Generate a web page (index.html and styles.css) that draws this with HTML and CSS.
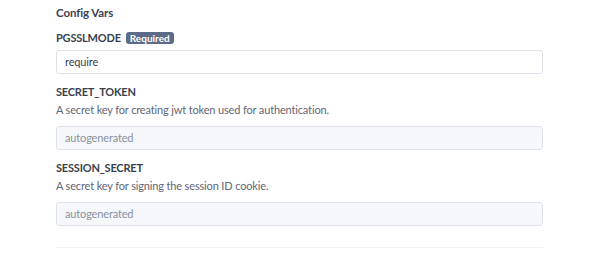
FILE: index.html
```html
<!DOCTYPE html>
<html>
<head>
<meta charset="utf-8">
<link rel="stylesheet" href="styles.css">
</head>
<body>
<div class="panel">
  <h3 class="title">Config Vars</h3>
  <div class="field">
    <div class="label">PGSSLMODE <span class="badge">Required</span></div>
    <div class="input">require</div>
  </div>
  <div class="field">
    <div class="label">SECRET_TOKEN</div>
    <div class="desc">A secret key for creating jwt token used for authentication.</div>
    <div class="input input-muted">autogenerated</div>
  </div>
  <div class="field">
    <div class="label">SESSION_SECRET</div>
    <div class="desc">A secret key for signing the session ID cookie.</div>
    <div class="input input-muted">autogenerated</div>
  </div>
  <div class="divider"></div>
</div>
</body>
</html>
```
FILE: styles.css
```css
html, body {
  margin: 0;
  padding: 0;
  background: #ffffff;
}
body {
  font-family: "Lato", "Open Sans", sans-serif;
  color: #3f4451;
}
.panel {
  width: 487px;
  margin-left: 56px;
  padding-top: 5px;
  display: flex;
  flex-direction: column;
  gap: 11px;
}
.title {
  margin: 0;
  font-size: 11.5px;
  font-weight: 700;
  line-height: 15px;
  letter-spacing: -0.1px;
  color: #3c4150;
}
.field {
  display: flex;
  flex-direction: column;
}
.label {
  display: flex;
  align-items: center;
  gap: 5px;
  font-size: 11px;
  font-weight: 700;
  line-height: 14px;
  height: 14px;
  letter-spacing: -0.2px;
  color: #3a3f4d;
}
.badge {
  display: inline-block;
  background: #5c6c88;
  color: #ffffff;
  font-size: 10px;
  font-weight: 700;
  line-height: 12px;
  height: 12px;
  padding: 0 4px;
  letter-spacing: 0;
  border-radius: 3px;
}
.desc {
  margin-top: 4px;
  font-size: 11px;
  line-height: 14px;
  letter-spacing: -0.15px;
  color: #5f6675;
}
.input {
  box-sizing: border-box;
  height: 24px;
  margin-top: 5px;
  border: 1px solid #dde1e9;
  border-radius: 3px;
  padding: 0 8px;
  font-size: 11px;
  line-height: 22px;
  letter-spacing: -0.15px;
  color: #3a3f4d;
  background: #ffffff;
}
.input-muted {
  margin-top: 9px;
  background: #f6f7fb;
  color: #8a909c;
}
.divider {
  margin-top: 10px;
  height: 1px;
  background: #f0f2f5;
}
```
